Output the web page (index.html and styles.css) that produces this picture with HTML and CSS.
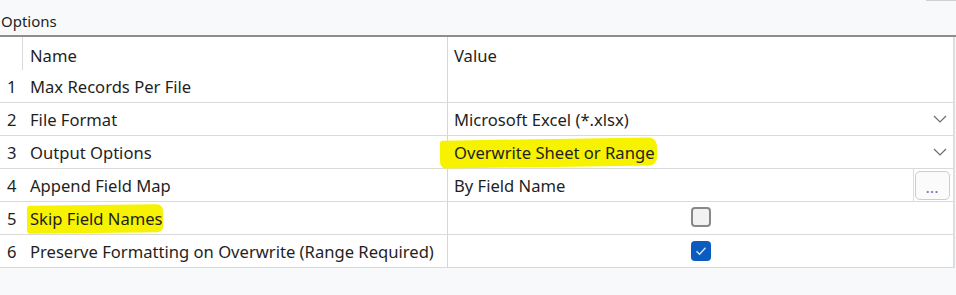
FILE: index.html
```html
<!DOCTYPE html>
<html>
    <head>
        <meta charset="utf-8">
        <title>Options</title>
        <link rel="stylesheet" href="styles.css">
    </head>
    <body>
        <div class="options">
            <div class="title">Options</div>
            <div class="grid">
                <div class="row head">
                    <div class="num"></div>
                    <div class="name">Name</div>
                    <div class="value">Value</div>
                </div>
                <div class="row">
                    <div class="num">1</div>
                    <div class="name">Max Records Per File</div>
                    <div class="value"></div>
                </div>
                <div class="row">
                    <div class="num">2</div>
                    <div class="name">File Format</div>
                    <div class="value combo">
                        <span class="text">Microsoft Excel (*.xlsx)</span>
                        <svg class="chev" width="14" height="8" viewBox="0 0 14 8"><path d="M1 1 L7 7 L13 1" fill="none" stroke="#6b6b6b" stroke-width="1.2"/></svg>
                    </div>
                </div>
                <div class="row">
                    <div class="num">3</div>
                    <div class="name">Output Options</div>
                    <div class="value combo">
                        <span class="text"><span class="mark wide">Overwrite Sheet or Range</span></span>
                        <svg class="chev" width="14" height="8" viewBox="0 0 14 8"><path d="M1 1 L7 7 L13 1" fill="none" stroke="#6b6b6b" stroke-width="1.2"/></svg>
                    </div>
                </div>
                <div class="row">
                    <div class="num">4</div>
                    <div class="name">Append Field Map</div>
                    <div class="value combo">
                        <span class="text">By Field Name</span>
                        <span class="sep"></span>
                        <button class="dots">...</button>
                    </div>
                </div>
                <div class="row">
                    <div class="num">5</div>
                    <div class="name"><span class="mark">Skip Field Names</span></div>
                    <div class="value check-cell">
                        <span class="box"></span>
                    </div>
                </div>
                <div class="row">
                    <div class="num">6</div>
                    <div class="name">Preserve Formatting on Overwrite (Range Required)</div>
                    <div class="value check-cell">
                        <span class="box checked">
                            <svg width="12" height="10" viewBox="0 0 12 10"><path d="M1.5 5.2 L4.6 8.2 L10.5 1.8" fill="none" stroke="#d8e6f7" stroke-width="1.4"/></svg>
                        </span>
                    </div>
                </div>
            </div>
        </div>
    </body>
</html>
```

FILE: styles.css
```css
html, body {
    margin: 0;
    padding: 0;
    background: #f8f9fb;
    font-family: "Noto Sans", "Open Sans", sans-serif;
    color: #1f1f1f;
}
.options {
    width: 956px;
    height: 295px;
    overflow: hidden;
}
.title {
    position: relative;
    height: 37px;
    box-sizing: border-box;
    padding: 11px 0 0 1px;
    font-size: 15px;
    line-height: 20px;
    border-bottom: 2px solid #8d8d8d;
}
.title::after {
    /* edge of the window above */
    content: '';
    position: absolute;
    top: 0;
    left: 926px;
    width: 30px;
    height: 1px;
    background: #d0d0d0;
}
.grid {
    width: 955px;
    background: #fff;
    border-right: 2px solid #dedede;
    box-sizing: border-box;
    font-size: 16.6px;
}
.row {
    display: grid;
    grid-template-columns: 23px 424px 1fr;
    height: 33px;
    box-sizing: border-box;
    border-bottom: 1px solid #dadada;
}
.row.head {
    border-bottom: 0;
}
.row > div {
    display: flex;
    align-items: center;
    white-space: nowrap;
}
.num {
    padding-left: 7px;
}
.head .num {
    border-right: 1px solid #dadada;
}
.head .name, .head .value {
    padding-top: 3px;
}
.name {
    padding-left: 7px;
}
.value {
    padding-left: 6px;
    border-left: 1px solid #d6d6d6;
}
.combo .text {
    flex: 1;
}
.chev {
    margin-right: 6px;
}
.sep {
    align-self: stretch;
    width: 1px;
    background: #dcdcdc;
    margin-right: 1px;
}
.dots {
    width: 35px;
    height: 29px;
    margin-right: 3px;
    padding: 6px 0 0 0;
    border: 1px solid #cdcdcd;
    border-radius: 5px;
    background: #fbfbfb;
    font-family: "Noto Sans", sans-serif;
    font-size: 12px;
    font-weight: bold;
    letter-spacing: 1px;
    color: #8a6aa0;
}
.mark {
    position: relative;
    z-index: 0;
}
.mark::before {
    content: '';
    position: absolute;
    z-index: -1;
    left: -3px;
    right: 0;
    top: -2px;
    bottom: -3px;
    background: #f6f200;
    border-radius: 3px 6px 6px 3px;
    transform: rotate(-0.6deg);
}
.mark.wide::before {
    left: -14px;
    right: -2px;
    top: -2px;
    bottom: -3px;
    border-radius: 3px 8px 8px 6px;
    transform: rotate(-0.9deg);
}
.check-cell {
    justify-content: center;
    padding-left: 0;
}
.box {
    width: 20px;
    height: 20px;
    box-sizing: border-box;
    border: 2px solid #888;
    border-radius: 4px;
    background: #f2f2f2;
    margin-top: -2px;
}
.box.checked {
    display: flex;
    align-items: center;
    justify-content: center;
    border: 0;
    background: #0a5cbf;
    margin-top: 0;
}
```
